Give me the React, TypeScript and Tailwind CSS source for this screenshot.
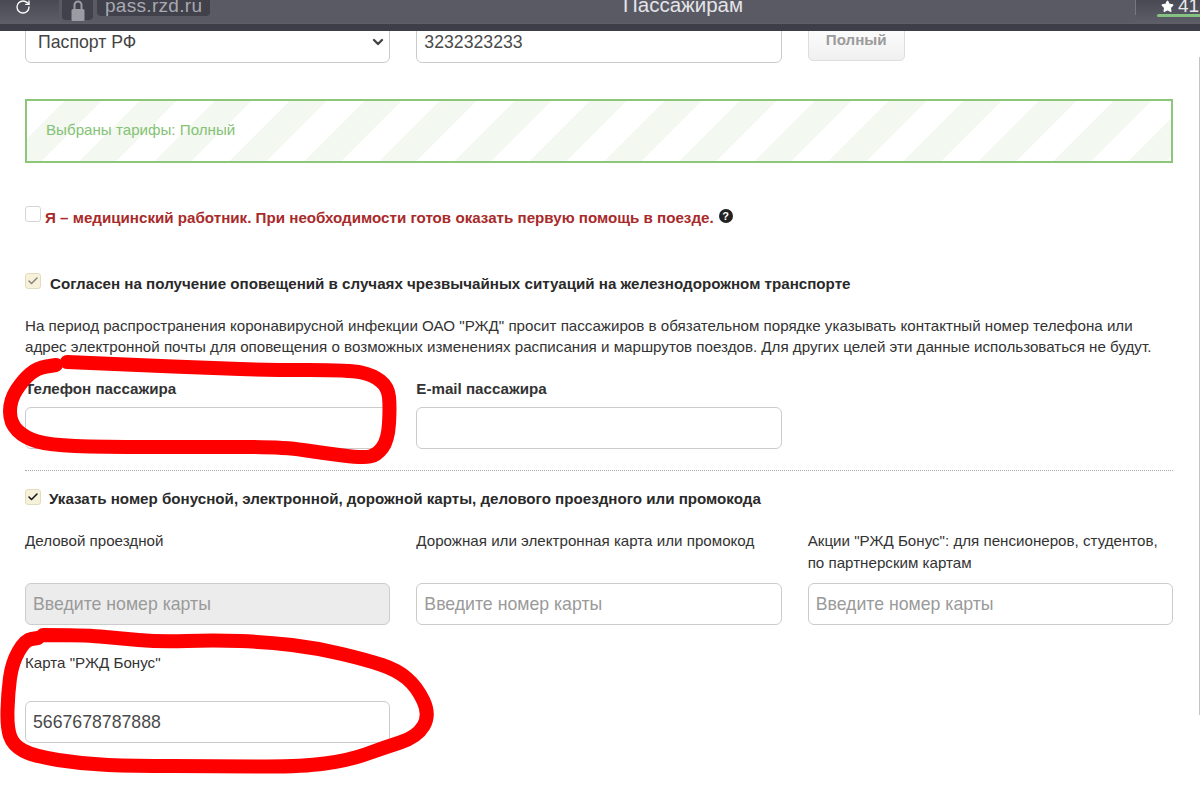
import { ChevronDown, Check, RotateCw, Star } from 'lucide-react';

const font = "font-['Liberation_Sans',Arial,sans-serif]";

// hand-drawn ring, points taken along the middle of the stroke
const phoneRing: [number, number][] = [
  [67, 362], [133, 365], [213, 368], [267, 370], [350, 370], [373, 375], [388, 387], [390, 407], [388, 440],
  [377, 455], [363, 458], [323, 453], [283, 447], [200, 447], [100, 447], [50, 445], [25, 438], [10, 423],
  [10, 400], [23, 380], [37, 368], [56, 365],
];
const bonusRing: [number, number][] = [
  [43, 635], [83, 635], [117, 638], [160, 642], [213, 640], [267, 642], [317, 648], [367, 660], [397, 670],
  [417, 687], [430, 715], [417, 737], [383, 748], [350, 760], [300, 767], [213, 766], [133, 766], [83, 764],
  [33, 756], [13, 745], [7, 727], [8, 693], [12, 663], [25, 640], [38, 638],
];

function smooth(points: [number, number][]) {
  let d = `M${points[0][0]} ${points[0][1]}`;
  for (let i = 1; i < points.length - 1; i++) {
    const midX = (points[i][0] + points[i + 1][0]) / 2;
    const midY = (points[i][1] + points[i + 1][1]) / 2;
    d += ` Q${points[i][0]} ${points[i][1]} ${midX} ${midY}`;
  }
  const last = points[points.length - 1];
  return `${d} L${last[0]} ${last[1]}`;
}

function Field({ value, placeholder, disabled }: { value?: string; placeholder?: string; disabled?: boolean }) {
  return (
    <div
      className={`h-[42px] rounded-[6px] border-[1.5px] border-[#cccccc] px-[7px] flex items-center text-[17.7px] ${
        disabled ? 'bg-[#ececec]' : 'bg-white'
      } ${value ? 'text-[#4a4a4a]' : 'text-[#9a9a9a]'}`}
    >
      {value ?? placeholder}
    </div>
  );
}

function Box({ checked, tone }: { checked?: boolean; tone?: 'dark' | 'light' }) {
  return (
    <span
      className={`w-[16px] h-[16px] shrink-0 rounded-[3px] border-[1.5px] flex items-center justify-center ${
        checked ? 'border-[#e3dcc0] bg-[#f7f1da]' : 'border-[#d5d5d5] bg-white'
      }`}
    >
      {checked && (
        <Check
          className={`w-[12px] h-[12px] ${tone === 'dark' ? 'text-[#111111]' : 'text-[#85857c]'}`}
          strokeWidth={3}
        />
      )}
    </span>
  );
}

export default function App() {
  return (
    <div className={`relative h-[799px] overflow-hidden bg-white ${font} text-[15.15px] text-[#333333]`}>
      {/* browser chrome over the page */}
      <div className="absolute top-0 left-0 right-0 h-[31px] z-10 bg-gradient-to-b from-[#484952] to-[#5f5f69] border-b-[7px] border-[#3d3e48] overflow-hidden">
        <RotateCw className="absolute left-[15px] top-[-1px] w-[16px] h-[16px] text-white" strokeWidth={2} />
        <div className="absolute left-[59px] top-[-6px] w-[1076px] h-[29px] rounded-l-[6px] bg-[#5a5a65]" />
        <div className="absolute left-[62px] top-[-6px] w-[31px] h-[26px] rounded-[4px] bg-[#40414b]" />
        {/* lock, shackle runs off the top of the picture */}
        <svg className="absolute left-[71px] top-0 w-[14px] h-[22px]" viewBox="0 0 14 22">
          <path d="M3.5 10 V5 a3.5 3.5 0 0 1 7 0 V10" fill="none" stroke="#9b9ba3" strokeWidth="2" />
          <rect x="0.5" y="9" width="13" height="12" rx="1.5" fill="#9b9ba3" />
        </svg>
        <div className="absolute left-[97px] top-[-6px] h-[22px] px-[8px] rounded-[4px] bg-[#40414b] text-[#a9a9b1] text-[19px] leading-[24px] tracking-[0.3px]">
          pass.rzd.ru
        </div>
        <div className="absolute left-[623px] top-[-7px] text-[20.5px] leading-[24px] text-[#e4e4e8]">Пассажирам</div>
        <div className="absolute left-[1135px] top-0 w-px h-[15px] bg-[#777780]" />
        <div className="absolute left-[1161px] top-[-6px] flex items-center gap-[4px] text-[#e8e8ec] text-[19px] leading-[24px]">
          <Star className="w-[13px] h-[13px] fill-white text-white" />
          41
        </div>
        <div className="absolute left-[1157px] top-[14px] w-[50px] h-[3px] rounded-full bg-[#86c184]" />
      </div>

      <div className="pl-[25px] w-[1173px] pt-[21px]">
        <div className="grid grid-cols-3 gap-x-[26px]">
          <div className="h-[42px] rounded-[6px] border-[1.5px] border-[#cccccc] pl-[12px] pr-[3px] flex items-center justify-between text-[17.7px] text-[#444444]">
            Паспорт РФ
            <ChevronDown className="w-[16px] h-[16px] text-[#444444]" strokeWidth={3.5} />
          </div>
          <Field value="3232323233" />
          <div>
            <div className="w-[97px] h-[40px] rounded-[5px] border-[1.5px] border-[#dddddd] bg-gradient-to-b from-white to-[#f0f0f0] flex items-center justify-center pb-[2px] font-bold text-[#9b9b9b]">
              Полный
            </div>
          </div>
        </div>

        <div className="mt-[36px] h-[64px] border-[2.5px] border-[#8cc67b] flex items-center pl-[19px] pb-[2px] text-[#84c274] bg-[repeating-linear-gradient(135deg,#ffffff_0px,#ffffff_26.5px,#f3f8f0_26.5px,#f3f8f0_53px)]">
          Выбраны тарифы: Полный
        </div>

        <label className="mt-[43px] flex items-start h-[20px]">
          <Box />
          <span className="ml-[4px] mt-[1px] font-bold text-[#a82a2a]">
            Я – медицинский работник. При необходимости готов оказать первую помощь в поезде.
          </span>
          <span className="ml-[5px] mt-[3px] w-[14px] h-[14px] rounded-full bg-[#222222] text-white text-[11px] font-bold flex items-center justify-center">
            ?
          </span>
        </label>

        <label className="mt-[47px] flex items-start h-[20px]">
          <Box checked />
          <span className="ml-[9px] font-bold text-[#2a2a2a]">
            Согласен на получение оповещений в случаях чрезвычайных ситуаций на железнодорожном транспорте
          </span>
        </label>

        <p className="mt-[22px] leading-[21px] text-[#333333] whitespace-nowrap">
          На период распространения коронавирусной инфекции ОАО "РЖД" просит пассажиров в обязательном порядке указывать контактный номер телефона или
          <br />
          адрес электронной почты для оповещения о возможных изменениях расписания и маршрутов поездов. Для других целей эти данные использоваться не будут.
        </p>

        <div className="mt-[22px] grid grid-cols-3 gap-x-[26px]">
          <div>
            <div className="h-[20px] leading-[20px] font-bold">Телефон пассажира</div>
            <div className="mt-[8px]">
              <Field />
            </div>
          </div>
          <div>
            <div className="h-[20px] leading-[20px] font-bold">E-mail пассажира</div>
            <div className="mt-[8px]">
              <Field />
            </div>
          </div>
        </div>

        <div className="mt-[21px] border-t border-dotted border-[#a8a8a8]" />

        <label className="mt-[18px] flex items-start h-[20px]">
          <Box checked tone="dark" />
          <span className="ml-[8px] -mt-[1px] font-bold text-[#2a2a2a]">
            Указать номер бонусной, электронной, дорожной карты, делового проездного или промокода
          </span>
        </label>

        <div className="mt-[21px] grid grid-cols-3 gap-x-[26px] leading-[22px]">
          <div className="h-[53px]">Деловой проездной</div>
          <div className="h-[53px]">Дорожная или электронная карта или промокод</div>
          <div className="h-[53px]">
            Акции "РЖД Бонус": для пенсионеров, студентов,
            <br />
            по партнерским картам
          </div>
          <Field placeholder="Введите номер карты" disabled />
          <Field placeholder="Введите номер карты" />
          <Field placeholder="Введите номер карты" />
        </div>

        <div className="mt-[28px] grid grid-cols-3 gap-x-[26px]">
          <div>
            <div className="h-[20px] leading-[20px]">Карта "РЖД Бонус"</div>
            <div className="mt-[28px]">
              <Field value="5667678787888" />
            </div>
          </div>
        </div>
      </div>

      {/* scrollbar edge at right */}
      <div className="absolute right-0 top-[57px] w-px h-[658px] bg-[#c4c4c4]" />

      {/* red hand-drawn marks on top of the screenshot */}
      <svg className="absolute inset-0 w-full h-full pointer-events-none" viewBox="0 0 1200 799" fill="none">
        <g stroke="#ff0000" strokeWidth="14" strokeLinecap="round" strokeLinejoin="round">
          <path d={smooth(phoneRing)} />
          <path d={smooth(bonusRing)} />
        </g>
      </svg>
    </div>
  );
}
